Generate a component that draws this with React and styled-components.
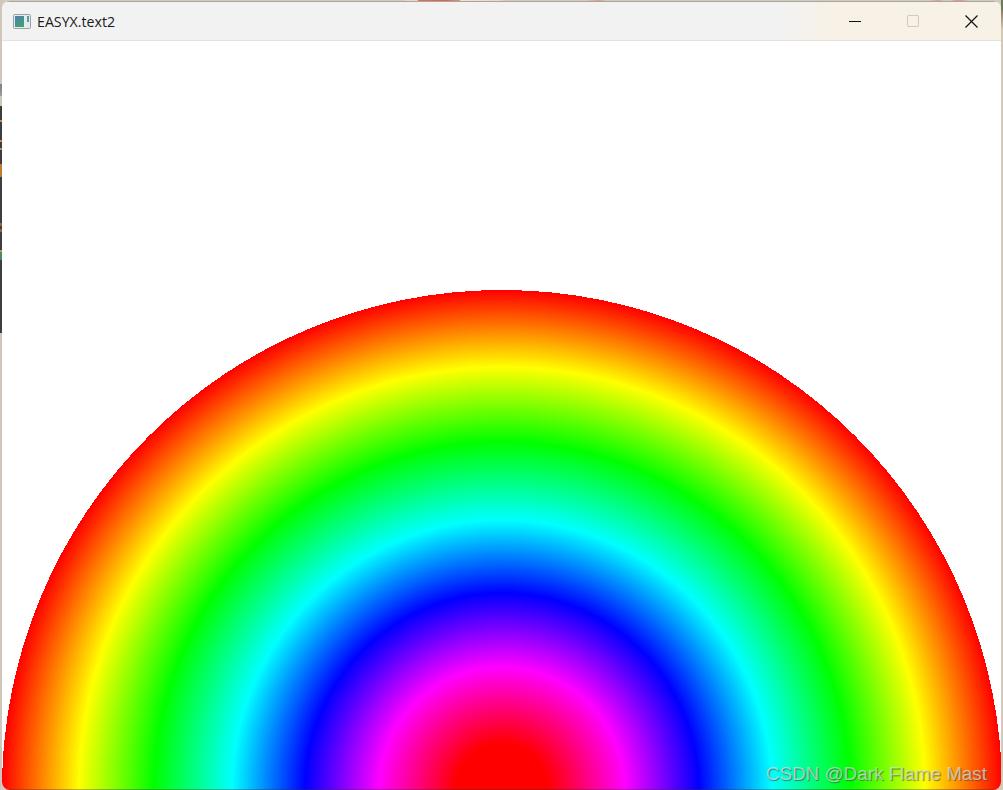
import React from "react";
import styled, { createGlobalStyle } from "styled-components";

const Global = createGlobalStyle`
  html, body { margin: 0; padding: 0; height: 100%; overflow: hidden; }
  #root { height: 100%; }
`;

const Desktop = styled.div`
  width: 1003px;
  height: 790px;
  box-sizing: border-box;
  padding: 1px 2px 0 2px;
  background:
    linear-gradient(90deg,
      transparent 405px, #ecd6cb 405px, #ecd6cb 418px,
      #e0705c 418px, #d8604c 445px, #e8907c 460px,
      #efe0d6 460px, #ecd8cc 500px, transparent 505px,
      transparent 585px, #e4b4a6 590px, #dc9a8a 600px, transparent 606px,
      transparent 930px, #e09a8a 938px, transparent 944px,
      transparent 950px, #e09a8a 956px, #e09a8a 962px, transparent 968px) 0 0 / 100% 1px no-repeat,
    linear-gradient(180deg,
      #cfc8ba 0, #cfc8ba 84px, #7b7d80 84px, #9a9ca0 96px, #cfc8ba 96px, #cfc8ba 106px,
      #3d3d3f 106px, #3d3d3f 120px, #c58a4a 120px, #c58a4a 122px,
      #3d3d3f 122px, #3d3d3f 140px, #c58a4a 140px, #c58a4a 142px,
      #3d3d3f 142px, #3d3d3f 148px, #c58a4a 148px, #c58a4a 150px,
      #3d3d3f 150px, #3d3d3f 164px, #c07a35 164px, #c07a35 177px,
      #3d3d3f 177px, #3d3d3f 223px, #8a6a3a 223px, #8a6a3a 226px,
      #3d3d3f 226px, #3d3d3f 229px, #8a6a3a 229px, #8a6a3a 232px,
      #3d3d3f 232px, #3d3d3f 250px, #c0a050 250px, #c0a050 252px,
      #4a8a6a 252px, #4a8a6a 260px, #3d3d3f 260px, #3d3d3f 333px,
      #cfc8ba 333px, #cfc8ba 100%) 0 0 / 2px 100% no-repeat,
    linear-gradient(180deg, #6b7a58 0, #6b7a58 10px, #8a7a60 10px, #d3c9b8 30px, #d3c9b8 100%) 100% 0 / 2px 100% no-repeat,
    #d3ccbe;
`;

const Window = styled.div`
  width: 999px;
  height: 789px;
  display: flex;
  flex-direction: column;
  border-radius: 8px;
  overflow: hidden;
  background: #fff;
`;

const TitleBar = styled.header`
  flex: none;
  height: 40px;
  box-sizing: border-box;
  display: flex;
  align-items: center;
  padding-left: 11px;
  border-top: 1px solid #a9a69d;
  border-bottom: 1px solid #e3e2e0;
  background: linear-gradient(90deg, #f3f2f2 0, #f3f2f2 780px, #f7f1e6 830px, #f7f1e6 100%);
`;

const AppIcon = styled.svg`
  flex: none;
  width: 18px;
  height: 15px;
`;

const Title = styled.span`
  margin-left: 6px;
  font-family: "Open Sans", "Noto Sans", sans-serif;
  font-size: 14.2px;
  color: #1a1a1a;
  white-space: nowrap;
`;

const Controls = styled.div`
  margin-left: auto;
  display: flex;
  height: 100%;
`;

const ControlButton = styled.div`
  width: 58.5px;
  display: flex;
  align-items: center;
  justify-content: center;
`;

const Client = styled.main`
  flex: 1;
  position: relative;
  overflow: hidden;
  &::after {
    content: "";
    position: absolute;
    left: 0;
    right: 0;
    bottom: 0;
    height: 1px;
    background: rgba(60, 50, 40, 0.35);
  }
`;

const Rainbow = styled.svg`
  display: block;
  width: 999px;
  height: 749px;
`;

const Watermark = styled.span`
  position: absolute;
  right: 14px;
  bottom: 5px;
  font-family: "Liberation Sans", Arial, sans-serif;
  font-size: 18.85px;
  line-height: 22px;
  color: rgba(215, 222, 222, 0.72);
  text-shadow: 1px 1px 1px rgba(60, 60, 60, 0.6);
  white-space: nowrap;
`;

const stops = [
  [0, "#ff0000"],
  [46, "#ff0000"],
  [123, "#ff00ff"],
  [197, "#0000ff"],
  [270, "#00ffff"],
  [348, "#00ff00"],
  [423, "#ffff00"],
  [500, "#ff0000"],
];

export default function App() {
  return (
    <>
      <Global />
      <Desktop>
        <Window>
          <TitleBar>
            <AppIcon viewBox="0 0 18 15">
              <defs>
                <linearGradient id="ico" x1="0" y1="0" x2="0.6" y2="1">
                  <stop offset="0" stopColor="#4f7fa8" />
                  <stop offset="1" stopColor="#3f9f78" />
                </linearGradient>
              </defs>
              <rect x="0.5" y="0.5" width="17" height="14" rx="1" fill="#e6eaee" stroke="#9aa0a6" />
              <rect x="2" y="2" width="9" height="11" fill="url(#ico)" />
              <rect x="14" y="2" width="2" height="6" fill="#4f9fa0" />
            </AppIcon>
            <Title>EASYX.text2</Title>
            <Controls>
              <ControlButton>
                <svg width="12" height="12" viewBox="0 0 12 12">
                  <path d="M0 6.5H12" stroke="#111" strokeWidth="1.2" />
                </svg>
              </ControlButton>
              <ControlButton>
                <svg width="12" height="12" viewBox="0 0 12 12">
                  <rect x="0.5" y="0.5" width="11" height="11" rx="1.5" fill="none" stroke="#cfcbc3" strokeWidth="1.1" />
                </svg>
              </ControlButton>
              <ControlButton>
                <svg width="13" height="13" viewBox="0 0 13 13">
                  <path d="M0.5 0.5L12.5 12.5M12.5 0.5L0.5 12.5" stroke="#111" strokeWidth="1.2" />
                </svg>
              </ControlButton>
            </Controls>
          </TitleBar>
          <Client>
            <Rainbow viewBox="0 0 999 749">
              <defs>
                <radialGradient id="rainbow" gradientUnits="userSpaceOnUse" cx="500" cy="749" r="500">
                  {stops.map(([r, c]) => (
                    <stop key={r} offset={r / 500} stopColor={c} />
                  ))}
                </radialGradient>
              </defs>
              <circle cx="500" cy="749" r="500" fill="url(#rainbow)" shapeRendering="crispEdges" />
            </Rainbow>
            <Watermark>CSDN @Dark Flame Mast</Watermark>
          </Client>
        </Window>
      </Desktop>
    </>
  );
}
